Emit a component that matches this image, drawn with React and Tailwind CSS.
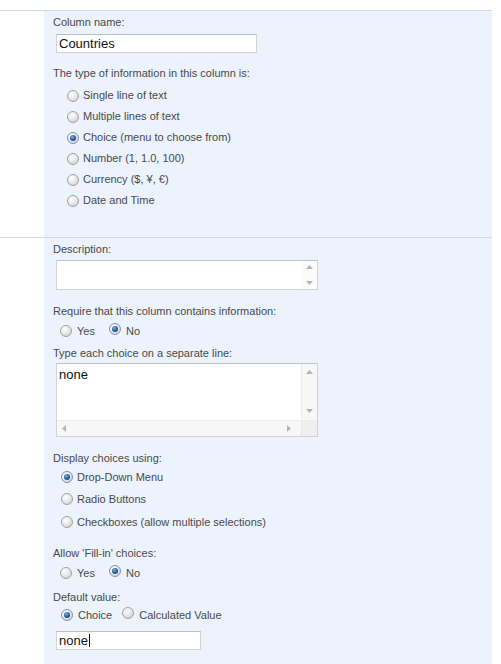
import React from "react";

function Radio({ checked }) {
  return (
    <span
      className={`relative inline-block w-[12px] h-[12px] shrink-0 rounded-full border ${
        checked ? "border-[#7f93a8]" : "border-[#a2a2a2]"
      } bg-[radial-gradient(circle_at_35%_30%,#ffffff_0%,#ececec_40%,#c9c9c9_100%)]`}
    >
      {checked && (
        <span className="absolute left-[2px] top-[2px] w-[6px] h-[6px] rounded-full bg-[radial-gradient(circle_at_40%_35%,#7fb4e6_0%,#22609e_50%,#0e3666_100%)]" />
      )}
    </span>
  );
}

function RadioRow({ checked, label, h = "h-[21px]" }) {
  return (
    <div className={`flex items-center ${h}`}>
      <Radio checked={checked} />
      <span className="ml-[4px]">{label}</span>
    </div>
  );
}

function Tri({ dir }) {
  const paths = {
    up: "M0 4 L3.5 0 L7 4 Z",
    down: "M0 0 L7 0 L3.5 4 Z",
    left: "M4 0 L4 7 L0 3.5 Z",
    right: "M0 0 L4 3.5 L0 7 Z",
  };
  const vertical = dir === "up" || dir === "down";
  return (
    <svg width={vertical ? 7 : 4} height={vertical ? 4 : 7} viewBox={vertical ? "0 0 7 4" : "0 0 4 7"}>
      <path d={paths[dir]} fill="#b4b4b4" />
    </svg>
  );
}

function Label({ children, className = "" }) {
  return <div className={`h-[14px] leading-[14px] ${className}`}>{children}</div>;
}

export default function App() {
  return (
    <div className="w-[501px] h-[664px] bg-white overflow-hidden font-['Liberation_Sans',Arial,sans-serif] text-[11px] text-[#4a4a4a]">
      <div className="h-[10px]" />
      {/* Section 1 */}
      <div className="w-[492px] flex border-t border-[#d6dae0]">
        <div className="w-[44px] shrink-0" />
        <div className="flex-1 bg-[#ecf3fd] h-[226px] pl-[9px] flex flex-col">
          <Label className="mt-[4px]">Column name:</Label>
          <div className="mt-[5px] ml-[3px] w-[201px] h-[19px] bg-white border border-[#d3d3d3] border-t-[#bdbdbd] flex items-center pl-[2px] text-[13px] text-[#111] leading-none">
            Countries
          </div>
          <Label className="mt-[13px]">The type of information in this column is:</Label>
          <div className="mt-[5px] ml-[14px] flex flex-col">
            <RadioRow label="Single line of text" />
            <RadioRow label="Multiple lines of text" />
            <RadioRow checked label="Choice (menu to choose from)" />
            <RadioRow label="Number (1, 1.0, 100)" />
            <RadioRow label="Currency ($, ¥, €)" />
            <RadioRow label="Date and Time" />
          </div>
        </div>
      </div>
      {/* Section 2 */}
      <div className="w-[492px] flex border-t border-[#d6dae0]">
        <div className="w-[44px] shrink-0" />
        <div className="flex-1 bg-[#ecf3fd] h-[426px] pl-[9px] flex flex-col">
          <Label className="mt-[4px]">Description:</Label>
          <div className="mt-[4px] ml-[3px] w-[262px] h-[30px] bg-white border border-[#d3d3d3] border-t-[#c2c2c2] flex">
            <div className="flex-1" />
            <div className="w-[16px] flex flex-col items-center justify-between py-[4px] bg-[#fbfbfb]">
              <Tri dir="up" />
              <Tri dir="down" />
            </div>
          </div>
          <Label className="mt-[14px]">Require that this column contains information:</Label>
          <div className="mt-[4px] ml-[7px] flex items-center h-[18px]">
            <Radio />
            <span className="ml-[5px]">Yes</span>
            <span className="ml-[14px]"><Radio checked /></span>
            <span className="ml-[5px]">No</span>
          </div>
          <Label className="mt-[6px]">Type each choice on a separate line:</Label>
          <div className="mt-[3px] ml-[3px] w-[262px] h-[74px] bg-white border border-[#d3d3d3] border-t-[#c2c2c2] flex flex-col">
            <div className="flex flex-1">
              <div className="flex-1 pl-[2px] pt-[3px] text-[13px] text-[#111] leading-[15px]">none</div>
              <div className="w-[16px] flex flex-col items-center justify-between pt-[6px] pb-[7px] bg-[#f7f7f7] border-l border-[#ececec]">
                <Tri dir="up" />
                <Tri dir="down" />
              </div>
            </div>
            <div className="flex h-[16px] border-t border-[#ececec]">
              <div className="flex-1 flex items-center justify-between pl-[5px] pr-[10px] bg-[#f7f7f7]">
                <Tri dir="left" />
                <Tri dir="right" />
              </div>
              <div className="w-[16px] bg-[#efefef] border-l border-[#e6e6e6]" />
            </div>
          </div>
          <Label className="mt-[14px]">Display choices using:</Label>
          <div className="mt-[1px] ml-[8px] flex flex-col">
            <RadioRow checked label="Drop-Down Menu" h="h-[22px]" />
            <RadioRow label="Radio Buttons" h="h-[22px]" />
            <RadioRow label="Checkboxes (allow multiple selections)" h="h-[24px]" />
          </div>
          <Label className="mt-[12px]">Allow 'Fill-in' choices:</Label>
          <div className="mt-[4px] ml-[7px] flex items-center h-[18px]">
            <Radio />
            <span className="ml-[5px]">Yes</span>
            <span className="ml-[14px]"><Radio checked /></span>
            <span className="ml-[5px]">No</span>
          </div>
          <Label className="mt-[8px]">Default value:</Label>
          <div className="mt-[2px] ml-[8px] flex items-center h-[18px]">
            <Radio checked />
            <span className="ml-[5px]">Choice</span>
            <span className="ml-[10px]"><Radio /></span>
            <span className="ml-[5px]">Calculated Value</span>
          </div>
          <div className="mt-[7px] ml-[3px] w-[145px] h-[19px] bg-white border border-[#d3d3d3] border-t-[#bdbdbd] flex items-center pl-[2px] text-[13px] text-[#111] leading-none">
            none<span className="inline-block w-[1px] h-[13px] bg-black ml-[1px]" />
          </div>
        </div>
      </div>
    </div>
  );
}
